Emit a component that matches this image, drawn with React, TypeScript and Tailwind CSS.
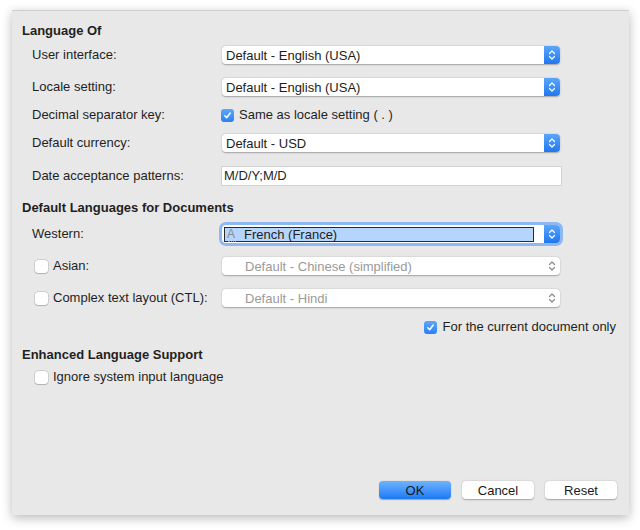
import React from "react";

function Stepper({ active = true }: { active?: boolean }) {
  const stroke = active ? "#ffffff" : "#8a8a8a";
  return (
    <div
      className={
        active
          ? "flex items-center justify-center w-[16px] h-full rounded-r-[4px] bg-gradient-to-b from-[#5aa6fb] to-[#1d77f0]"
          : "flex items-center justify-center w-[16px] h-full rounded-r-[4px]"
      }
    >
      <svg width="8" height="12" viewBox="0 0 8 12" fill="none">
        <path d="M1.5 4.5 L4 2 L6.5 4.5" stroke={stroke} strokeWidth="1.2" strokeLinecap="round" strokeLinejoin="round" />
        <path d="M1.5 7.5 L4 10 L6.5 7.5" stroke={stroke} strokeWidth="1.2" strokeLinecap="round" strokeLinejoin="round" />
      </svg>
    </div>
  );
}

function Select({ value, disabled }: { value: string; disabled?: boolean }) {
  return (
    <div className="flex items-center w-[338px] h-[18px] bg-white rounded-[4px] shadow-[0_0.5px_1.5px_rgba(0,0,0,0.3)]">
      <span
        className={
          disabled
            ? "flex-1 pl-[23px] text-[13px] text-[#9a9a9a] leading-none"
            : "flex-1 pl-[4px] text-[13px] text-[#1d1d1d] leading-none"
        }
      >
        {value}
      </span>
      <Stepper active={!disabled} />
    </div>
  );
}

function FocusSelect({ value }: { value: string }) {
  return (
    <div className="flex items-center w-[338px] h-[18px] bg-white rounded-[4px] ring-[3px] ring-[#8db8f2]">
      <div className="flex items-center flex-1 h-[15px] ml-[2px] mr-[10px] bg-[#b5d5fd] border border-[#2a2a2a]">
        <span className="relative w-[19px] text-[12px] text-[#8a8a8a] pl-[2px] leading-none">
          A
          <span className="absolute left-[3px] bottom-[-2px] w-[8px] h-[1px] border-b border-dotted border-[#3bb26b]" />
        </span>
        <span className="text-[13px] text-[#1d1d1d] leading-none">{value}</span>
      </div>
      <Stepper />
    </div>
  );
}

function Check({ checked }: { checked?: boolean }) {
  return checked ? (
    <div className="flex items-center justify-center w-[13px] h-[13px] rounded-[3px] bg-gradient-to-b from-[#5ba8fb] to-[#2a80f2]">
      <svg width="9" height="9" viewBox="0 0 9 9" fill="none">
        <path d="M1.8 4.8 L3.7 6.8 L7.2 2" stroke="#fff" strokeWidth="1.5" strokeLinecap="round" strokeLinejoin="round" />
      </svg>
    </div>
  ) : (
    <div className="w-[13px] h-[13px] rounded-[3px] bg-white shadow-[0_0_0_0.5px_rgba(0,0,0,0.2),0_0.5px_1px_rgba(0,0,0,0.15)]" />
  );
}

function Row({ label, mt, children }: { label: React.ReactNode; mt: string; children?: React.ReactNode }) {
  return (
    <div className={`flex items-center h-[20px] ${mt}`}>
      <div className="w-[200px] pl-[10px] flex items-center">{label}</div>
      {children}
    </div>
  );
}

export default function App() {
  return (
    <div className="w-[640px] h-[530px] bg-white pt-[10px] pl-[12px] font-['Liberation_Sans',Arial,sans-serif] text-[13px] text-[#1f1f1f]">
      <div className="flex flex-col w-[617px] h-[505px] bg-[#e8e8e8] border-t border-[#cfcfcf] shadow-[0_3px_10px_rgba(0,0,0,0.28)] pl-[10px] pt-[10px]">
        <div className="flex items-center h-[20px] font-bold">Language Of</div>

        <Row label="User interface:" mt="mt-[4px]">
          <Select value="Default - English (USA)" />
        </Row>
        <Row label="Locale setting:" mt="mt-[12px]">
          <Select value="Default - English (USA)" />
        </Row>
        <Row label="Decimal separator key:" mt="mt-[8px]">
          <div className="flex items-center gap-[5px] -ml-[1px]">
            <Check checked />
            <span>Same as locale setting ( . )</span>
          </div>
        </Row>
        <Row label="Default currency:" mt="mt-[8px]">
          <Select value="Default - USD" />
        </Row>
        <Row label="Date acceptance patterns:" mt="mt-[13px]">
          <div className="flex items-center w-[341px] h-[20px] -ml-[1px] bg-white border border-[#d2d2d2] pl-[2px]">
            M/D/Y;M/D
          </div>
        </Row>

        <div className="flex items-center h-[20px] mt-[12px] font-bold">Default Languages for Documents</div>
        <Row label="Western:" mt="mt-[6px]">
          <FocusSelect value="French (France)" />
        </Row>
        <Row
          mt="mt-[12px]"
          label={
            <div className="flex items-center gap-[5px] ml-[3px]">
              <Check />
              <span>Asian:</span>
            </div>
          }
        >
          <Select value="Default - Chinese (simplified)" disabled />
        </Row>
        <Row
          mt="mt-[12px]"
          label={
            <div className="flex items-center gap-[5px] ml-[3px]">
              <Check />
              <span>Complex text layout (CTL):</span>
            </div>
          }
        >
          <Select value="Default - Hindi" disabled />
        </Row>
        <div className="flex items-center justify-end h-[20px] mt-[9px] pr-[13px] gap-[6px]">
          <Check checked />
          <span>For the current document only</span>
        </div>

        <div className="flex items-center h-[20px] mt-[8px] font-bold">Enhanced Language Support</div>
        <div className="flex items-center h-[20px] mt-[2px] pl-[13px] gap-[5px]">
          <Check />
          <span>Ignore system input language</span>
        </div>

        <div className="flex-1" />
        <div className="flex justify-end items-center gap-[11px] pr-[12px] pb-[16px]">
          <button className="w-[72px] h-[18px] rounded-[4px] bg-gradient-to-b from-[#6cb3ff] to-[#1a79f3] text-[13px] text-[#1a1a1a] leading-none shadow-[0_0.5px_1px_rgba(0,0,0,0.3)]">
            OK
          </button>
          <button className="w-[72px] h-[18px] rounded-[4px] bg-white text-[13px] text-[#1a1a1a] leading-none shadow-[0_0.5px_1.5px_rgba(0,0,0,0.3)]">
            Cancel
          </button>
          <button className="w-[72px] h-[18px] rounded-[4px] bg-white text-[13px] text-[#1a1a1a] leading-none shadow-[0_0.5px_1.5px_rgba(0,0,0,0.3)]">
            Reset
          </button>
        </div>
      </div>
    </div>
  );
}
